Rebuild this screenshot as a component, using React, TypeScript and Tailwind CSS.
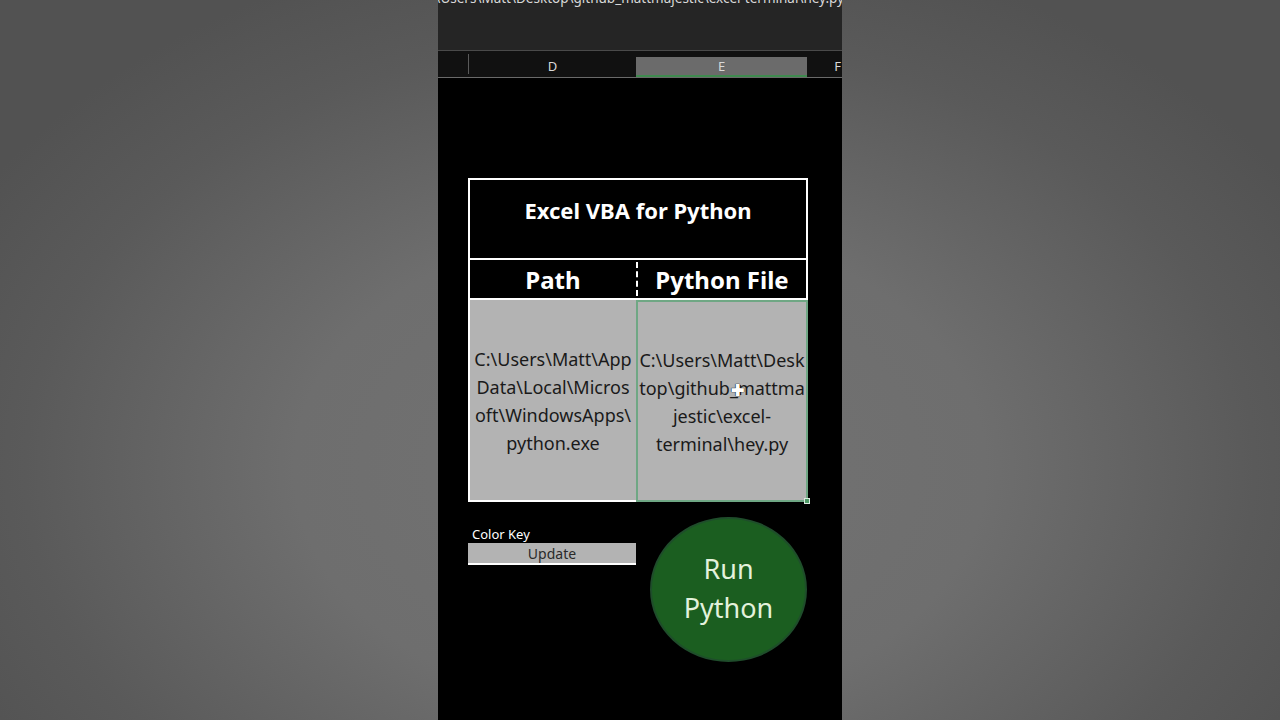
import React from "react";

export default function App() {
  return (
    <div className="w-[1280px] h-[720px] overflow-hidden flex justify-center bg-[radial-gradient(ellipse_60%_75%_at_50%_65%,#737373_0%,#6e6e6e_45%,#5a5a5a_80%,#525252_100%)]" style={{ fontFamily: '"Noto Sans", "Open Sans", sans-serif' }}>
      <div className="w-[404px] h-[720px] bg-black flex flex-col">
        {/* Formula bar */}
        <div className="h-[50px] bg-[#252525] overflow-hidden flex justify-end">
          <div className="whitespace-nowrap text-[13.5px] leading-[13px] text-[#d8d8d8] -mt-[8px] -mr-[2px]">
            C:\Users\Matt\Desktop\github_mattmajestic\excel-terminal\hey.py
          </div>
        </div>
        <div className="h-[1px] bg-[#4a4a4a]" />
        {/* Column headers */}
        <div className="h-[26px] bg-[#111111] flex text-[13px] text-[#d8d8d8]">
          <div className="w-[31px] border-r border-[#5a5a5a] my-[3px]" />
          <div className="w-[167px] flex items-center justify-center pt-[6px]">D</div>
          <div className="w-[171px] flex items-center justify-center bg-[#6b6b6b] border-b-2 border-[#3f8a4f] mt-[6px] pt-[2px]">E</div>
          <div className="flex-1 flex items-center justify-end pr-[1px] pt-[6px]">F</div>
        </div>
        <div className="h-[1px] bg-[#6a6a6a]" />

        {/* Table */}
        <div className="ml-[30px] mt-[100px] w-[340px] border-2 border-white flex flex-col">
          <div className="h-[80px] border-b-2 border-white flex justify-center pt-[16px]">
            <span className="text-white font-bold text-[22px] leading-[28px]">Excel VBA for Python</span>
          </div>
          <div className="h-[40px] flex border-b-2 border-white">
            <div className="w-[166px] flex items-center justify-center text-white font-bold text-[24px] leading-none pt-[2px]">Path</div>
            <div className="w-0 border-l-2 border-dashed border-white my-[2px]" />
            <div className="flex-1 flex items-center justify-center text-white font-bold text-[24px] leading-none pt-[2px]">Python File</div>
          </div>
          <div className="h-[200px] flex bg-[#b3b3b3]">
            <div className="w-[166px] flex items-center justify-center text-center text-[#1a1a1a] text-[18px] leading-[28px] pt-[2px] whitespace-nowrap">
              <div>
                C:\Users\Matt\App<br />Data\Local\Micros<br />oft\WindowsApps\<br />python.exe
              </div>
            </div>
            <div className="relative flex-1 flex items-center justify-center text-center text-[#1a1a1a] text-[18px] leading-[28px] pt-[2px] border-2 border-[#6fa784] -mr-[2px] -mb-[2px] whitespace-nowrap">
              <div>
                C:\Users\Matt\Desk<br />top\github_mattma<br />jestic\excel-<br />terminal\hey.py
              </div>
              <div className="absolute right-[-4px] bottom-[-4px] w-[6px] h-[6px] bg-[#4e9a66] border border-[#d9eadf]" />
              <div className="absolute left-[93px] top-[80px] text-white text-[16px] font-bold leading-none" style={{ textShadow: "0 0 1px #000, 0 0 1px #000" }}>✚</div>
            </div>
          </div>
        </div>

        {/* Bottom area */}
        <div className="flex mt-[15px] ml-[30px]">
          <div className="w-[168px] flex flex-col mt-[9px]">
            <div className="text-white text-[13px] leading-[17px] pl-[4px]">Color Key</div>
            <div className="h-[22px] bg-[#b3b3b3] border-b-2 border-white flex items-center justify-center text-[#2a2a2a] text-[14px]">
              Update
            </div>
          </div>
          <div className="ml-[14px] w-[157px] h-[145px] rounded-[50%] bg-[#1b5e20] border-2 border-[#1f4d2b] flex flex-col items-center justify-center text-[#e3f2dc] text-[27px] leading-[39px] pb-[3px]">
            <span>Run</span>
            <span>Python</span>
          </div>
        </div>
      </div>
    </div>
  );
}
